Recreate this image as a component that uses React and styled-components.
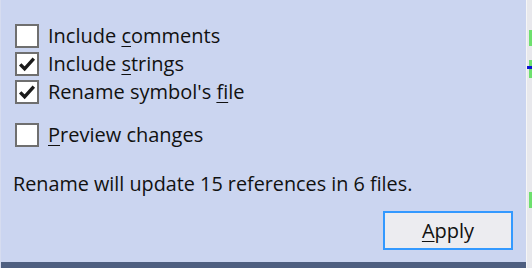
import React from 'react'
import styled, {createGlobalStyle} from 'styled-components'

const Global = createGlobalStyle`
  html, body {
    margin: 0;
    padding: 0;
    background: #eeeef2;
  }
  body {
    font-family: "Open Sans", "Noto Sans", sans-serif;
  }
`

const options = [
    {before: 'Include ', key: 'c', after: 'omments', checked: false},
    {before: 'Include ', key: 's', after: 'trings', checked: true},
    {before: "Rename symbol's ", key: 'f', after: 'ile', checked: true},
]

const Check = () => (
    <svg width="18" height="18" viewBox="0 0 18 18">
        <path d="M2.2 9.4 L6.6 13.8 L15.8 3.6" fill="none" stroke="#1a1a1a" strokeWidth="3.4" strokeLinejoin="miter"/>
    </svg>
)

const Option = ({before, hotkey, after, checked}) => (
    <Row>
        <Box>{checked && <Check/>}</Box>
        <Label>{before}<u>{hotkey}</u>{after}</Label>
    </Row>
)

const App = () => {
    return (
        <Page>
            <Global/>
            <Panel>
                <Content>
                    <Options>
                        {options.map(o => (
                            <Option key={o.key} before={o.before} hotkey={o.key} after={o.after} checked={o.checked}/>
                        ))}
                    </Options>
                    <Preview>
                        <Option before="" hotkey="P" after="review changes" checked={false}/>
                    </Preview>
                    <Status>Rename will update 15 references in 6 files.</Status>
                    <Footer>
                        <Button><u>A</u>pply</Button>
                    </Footer>
                </Content>
                <BottomBar/>
            </Panel>
            <Strip>
                <Marker top={30} height={16} color="#6ee06e" left={2}/>
                <Marker top={60} height={18} color="#6ee06e" left={2}/>
                <Marker top={66} height={3} color="#0a14d0" left={0}/>
                <Marker top={192} height={16} color="#6ee06e" left={2}/>
            </Strip>
        </Page>
    )
}

export default App

const Page = styled.div`
width: 532px;
height: 268px;
display: flex;
overflow: hidden;
`

const Panel = styled.div`
flex: 1;
display: flex;
flex-direction: column;
background-color: #cbd5f0;
border-left: 1px solid #d6dcef;
`

const Content = styled.div`
flex: 1;
display: flex;
flex-direction: column;
padding: 24px 13px 0 14px;
color: #111111;
`

const Options = styled.div`
display: flex;
flex-direction: column;
gap: 4px;
`

const Preview = styled.div`
margin-top: 19px;
`

const Row = styled.div`
height: 24px;
display: flex;
align-items: center;
gap: 9px;
`

const Box = styled.div`
width: 24px;
height: 24px;
box-sizing: border-box;
border: 2px solid #6f6f6f;
background-color: #ffffff;
display: flex;
align-items: center;
justify-content: center;
`

const Label = styled.span`
font-size: 20px;
line-height: 24px;
white-space: nowrap;
u{
    text-underline-offset: 3px;
    text-decoration-thickness: 1px;
}
`

const Status = styled.div`
margin-top: 23px;
margin-left: -2px;
font-size: 19.8px;
line-height: 28px;
white-space: nowrap;
`

const Footer = styled.div`
margin-top: 13px;
display: flex;
justify-content: flex-end;
`

const Button = styled.div`
width: 130px;
height: 39px;
box-sizing: border-box;
border: 2px solid #3399ff;
background-color: #ececf0;
display: flex;
align-items: center;
justify-content: center;
font-size: 20px;
color: #111111;
u{
    text-underline-offset: 3px;
    text-decoration-thickness: 1px;
}
`

const BottomBar = styled.div`
height: 6px;
background-color: #4e5f80;
`

const Strip = styled.div`
width: 5px;
position: relative;
background-color: #e8e8ec;
border-left: 1px solid #f6f6f6;
`

const Marker = styled.div`
position: absolute;
left: ${p => p.left}px;
right: 0;
top: ${p => p.top}px;
height: ${p => p.height}px;
background-color: ${p => p.color};
`
